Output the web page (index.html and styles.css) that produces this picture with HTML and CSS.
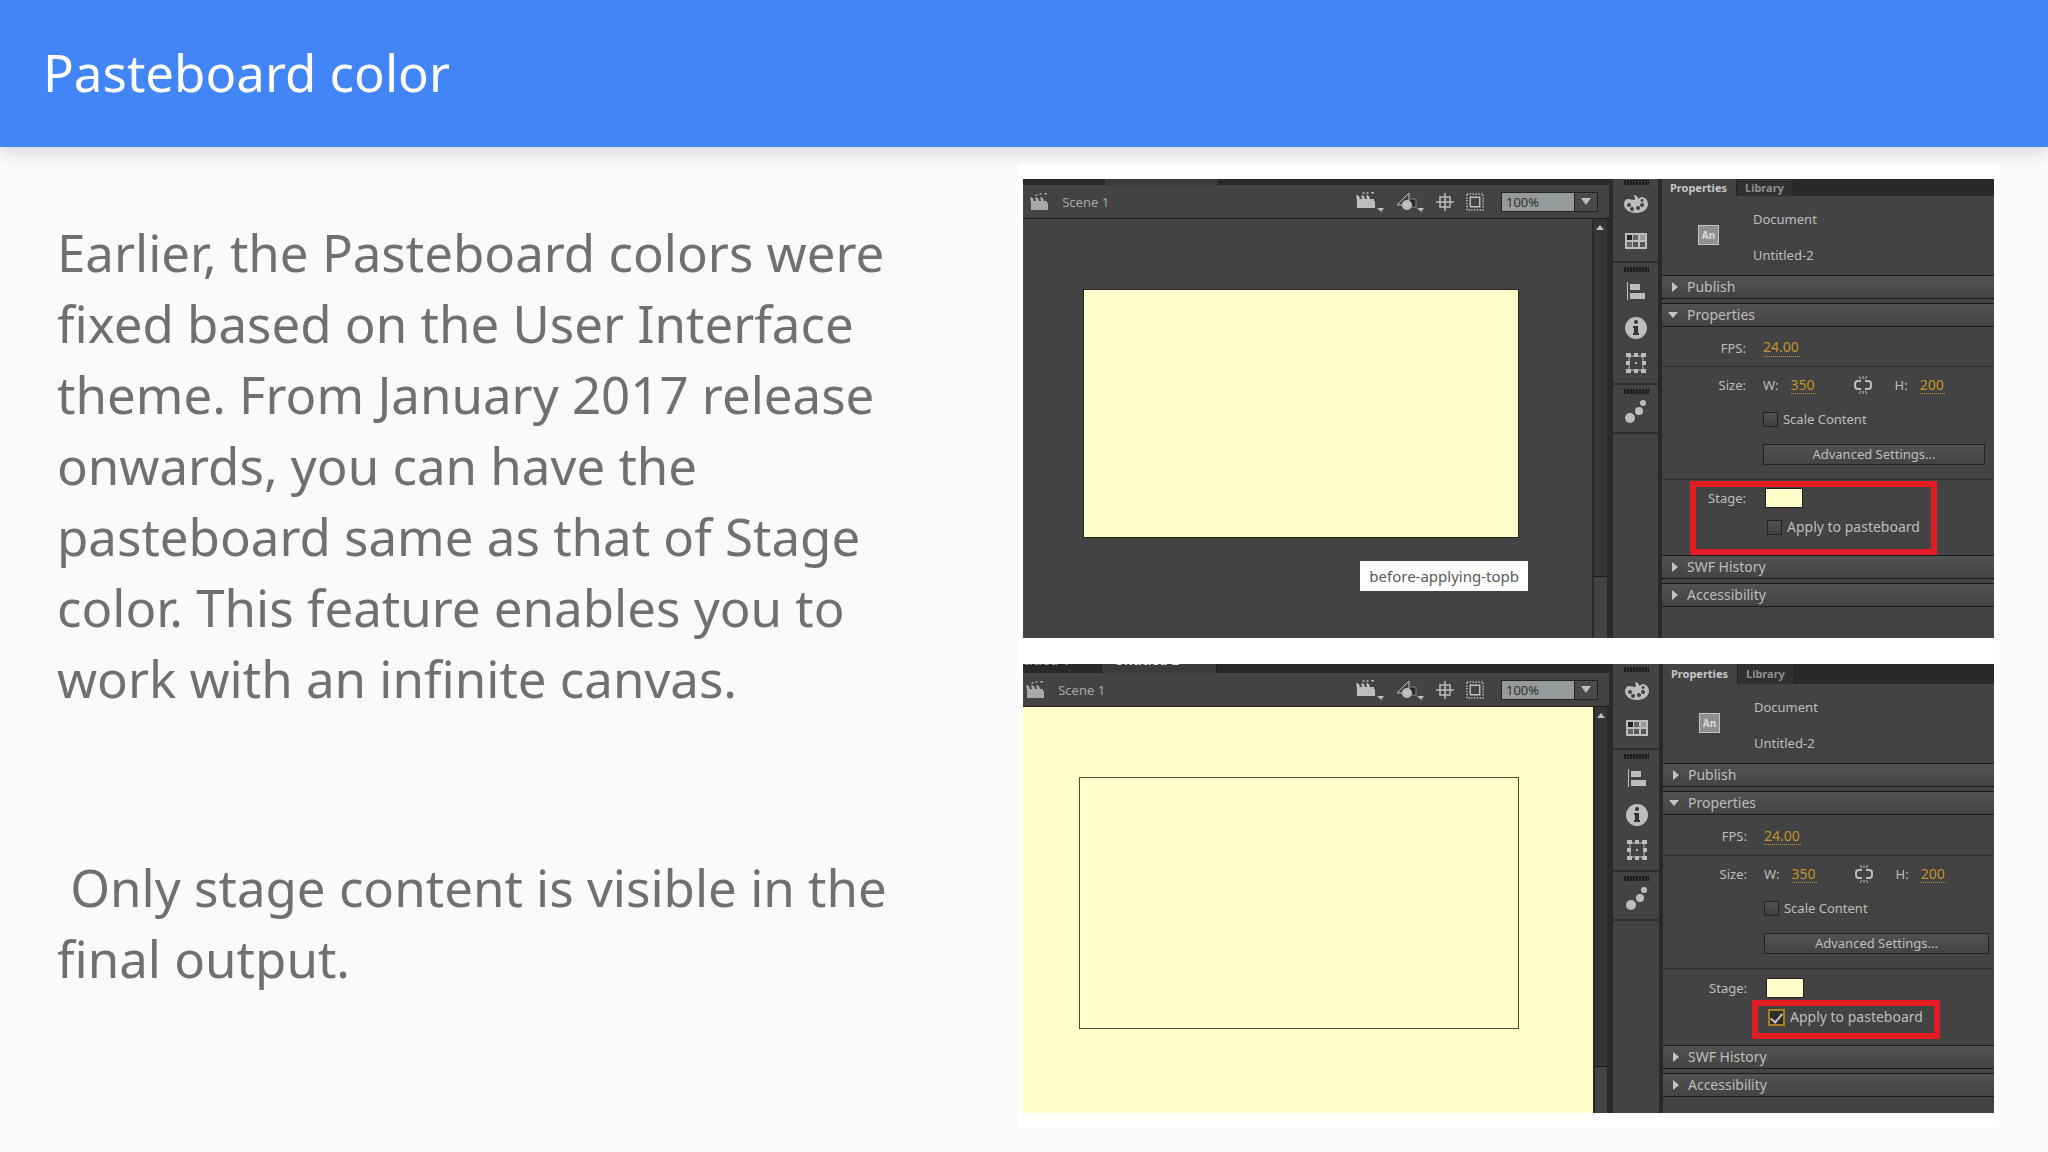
FILE: index.html
```html
<!DOCTYPE html>
<html lang="en">
<head>
    <meta charset="UTF-8">
    <meta name="viewport" content="width=device-width, initial-scale=1.0">
    <title>Pasteboard color</title>
    <link rel="stylesheet" href="styles.css">
</head>
<body>
    <!-- Icon set shared by both screens -->
    <svg class="sprite" aria-hidden="true">
        <symbol id="i-scene" viewBox="0 0 18 18">
            <path d="M1 10h17v7H1z"/>
            <path d="M0 4l3 1 1 3h2l-1-4 3 1 1 3h2l-1-4 3 1 1 3h3v2H1z"/>
            <path d="M5 2l2-1 1 1-2 1zM9 1l2-1 1 1-2 1zM14 0l3-1v2l-2 1z"/>
        </symbol>
        <symbol id="i-edit-scene" viewBox="0 0 28 20">
            <path d="M1 9h18v7H1z"/>
            <path d="M0 3l3 1 1 3h2L5 3l3 1 1 3h2l-1-4 3 1 1 3h4v2H1z"/>
            <path d="M6 1l2-1 1 1-2 1zM10 1l2-1 1 1-2 1zM15 0l3-1v2l-2 1z"/>
            <path d="M21 16h7l-3 4z"/>
        </symbol>
        <symbol id="i-edit-symbol" viewBox="0 0 28 20">
            <path d="M1 13L13 1v12z" fill="none" stroke="currentColor" stroke-width="1"/>
            <path d="M13 7h7v8h-7z" fill="#292929" stroke="#8a8a8a" stroke-width="1"/>
            <circle cx="11" cy="13" r="5"/>
            <path d="M21 16h7l-3 4z"/>
        </symbol>
        <symbol id="i-center" viewBox="0 0 18 20">
            <path d="M9 1v18M0 10h18M4 5h10v10H4z" fill="none" stroke="currentColor" stroke-width="1.5"/>
        </symbol>
        <symbol id="i-clip" viewBox="0 0 19 20">
            <path d="M1 1.5h17v17H1z" fill="none" stroke="#a0a0a0" stroke-width="2" stroke-dasharray="1.5 1.5"/>
            <path d="M4.500 5h10v10h-10z" fill="none" stroke="currentColor" stroke-width="1.500"/>
        </symbol>
        <symbol id="i-palette" viewBox="0 0 24 18">
            <path fill-rule="evenodd" d="M10 0c2 0 3 1 4 3 1 1 2 0 3-1 4 0 7 3 7 7 0 5-5 9-12 9S0 14 0 9c0-3 2-5 4-5 3 0 6 2 7 0 0-2-1-3-1-4zM5 8a2 2 0 1 0 .1 0zM8 12a2 2 0 1 0 .1 0zM14 11a2 2 0 1 0 .1 0zM18 8a2 2 0 1 0 .1 0zM18 4a1.500 1.500 0 1 0 .1 0z"/>
        </symbol>
        <symbol id="i-swatches" viewBox="0 0 22 16">
            <path d="M0 0h22v16H0z"/>
            <path d="M2 2h5v5H2z" fill="#222"/>
            <path d="M8 2h5v5H8zM2 9h5v5H2z" fill="#666"/>
            <path d="M15 2h5v5h-5z" fill="#999"/>
            <path d="M8 9h5v5H8zM15 9h5v5h-5z" fill="#555"/>
        </symbol>
        <symbol id="i-align" viewBox="0 0 18 18">
            <path d="M0 0h1v18H0zM3 2h10v6H3zM3 11h15v6H3z"/>
        </symbol>
        <symbol id="i-info" viewBox="0 0 22 22">
            <circle cx="11" cy="11" r="11"/>
            <circle cx="11" cy="5" r="2" fill="#333"/>
            <path d="M8 9h5v7h1v2H8v-2h1v-5H8z" fill="#333"/>
        </symbol>
        <symbol id="i-transform" viewBox="0 0 20 20">
            <path d="M3 3h14v14H3z" fill="none" stroke="currentColor" stroke-width="1"/>
            <path d="M0 0h5v4H0zM8 0h4v4H8zM15 0h5v4h-5zM0 8h4v4H0zM16 8h4v4h-4zM0 16h5v4H0zM8 16h4v4H8zM15 16h5v4h-5zM9 9h2v2H9z"/>
        </symbol>
        <symbol id="i-brush" viewBox="0 0 22 24">
            <circle cx="5" cy="18" r="5"/>
            <circle cx="14" cy="11" r="4"/>
            <circle cx="18" cy="3" r="3"/>
        </symbol>
        <symbol id="i-unlink" viewBox="0 0 18 18">
            <path d="M7 5H4a3 3 0 0 0-3 3v2a3 3 0 0 0 3 3h3M11 5h3a3 3 0 0 1 3 3v2a3 3 0 0 1-3 3h-3" fill="none" stroke="currentColor" stroke-width="2"/>
            <path d="M9 0v3M5 0l2 3M13 0l-2 3M9 18v-3M5 18l2-3M13 18l-2-3" fill="none" stroke="currentColor" stroke-width="1"/>
        </symbol>
    </svg>

    <header class="slide-header">
        <h1>Pasteboard color</h1>
    </header>

    <main class="slide-body">
        <section class="copy">
            <p>Earlier, the Pasteboard colors were fixed based on the User Interface theme. From January 2017 release onwards, you can have the pasteboard same as that of Stage color. This feature enables you to work with an infinite canvas.</p>
            <p>&nbsp;Only stage content is visible in the final output.</p>
        </section>

        <section class="shots">
            <!-- Before: pasteboard keeps the theme color -->
            <div class="shot shot-before">
                <div class="workspace">
                    <div class="doc-tabs"><span class="doc-tab"></span><span class="doc-tab active"></span></div>
                    <div class="toolbar">
                        <svg class="scene-icon"><use href="#i-scene"/></svg>
                        <span class="scene-name">Scene 1</span>
                        <button class="tool tool-wide" aria-label="Edit scene"><svg><use href="#i-edit-scene"/></svg></button>
                        <button class="tool tool-wide" aria-label="Edit symbols"><svg><use href="#i-edit-symbol"/></svg></button>
                        <button class="tool" aria-label="Center stage"><svg><use href="#i-center"/></svg></button>
                        <button class="tool" aria-label="Clip content"><svg><use href="#i-clip"/></svg></button>
                        <div class="zoom">
                            <select aria-label="Zoom"><option>100%</option></select>
                        </div>
                    </div>
                    <div class="view">
                        <div class="pasteboard">
                            <div class="stage"></div>
                            <span class="tooltip">before-applying-topb</span>
                        </div>
                        <div class="scrollbar"><div class="thumb"></div></div>
                    </div>
                </div>

                <nav class="dock">
                    <div class="dock-group">
                        <button aria-label="Color"><svg width="24" height="18"><use href="#i-palette"/></svg></button>
                        <button aria-label="Swatches"><svg width="22" height="16"><use href="#i-swatches"/></svg></button>
                    </div>
                    <div class="dock-group">
                        <button aria-label="Align"><svg width="18" height="18"><use href="#i-align"/></svg></button>
                        <button aria-label="Info"><svg width="22" height="22"><use href="#i-info"/></svg></button>
                        <button aria-label="Transform"><svg width="20" height="20"><use href="#i-transform"/></svg></button>
                    </div>
                    <div class="dock-group">
                        <button aria-label="Brushes"><svg width="22" height="24"><use href="#i-brush"/></svg></button>
                    </div>
                </nav>

                <div class="panel">
                    <div class="panel-tabs">
                        <button class="panel-tab active">Properties</button>
                        <button class="panel-tab">Library</button>
                    </div>
                    <div class="doc-info">
                        <span class="an-icon">An</span>
                        <div class="doc-names">
                            <span>Document</span>
                            <span>Untitled-2</span>
                        </div>
                    </div>
                    <button class="section-title">Publish</button>
                    <button class="section-title open">Properties</button>
                    <div class="row row-fps">
                        <label class="row-label" for="fps-1">FPS:</label>
                        <input class="hot-text hot-wide" id="fps-1" type="text" value="24.00">
                    </div>
                    <div class="row row-size">
                        <span class="row-label">Size:</span>
                        <label for="w-1">W:</label>
                        <input class="hot-text" id="w-1" type="text" value="350">
                        <svg class="unlink"><use href="#i-unlink"/></svg>
                        <label for="h-1">H:</label>
                        <input class="hot-text" id="h-1" type="text" value="200">
                    </div>
                    <div class="row row-check">
                        <input id="scale-1" type="checkbox">
                        <label for="scale-1">Scale Content</label>
                    </div>
                    <div class="row row-button">
                        <button class="advanced">Advanced Settings...</button>
                    </div>
                    <div class="stage-settings">
                        <div class="row row-stage">
                            <span class="row-label">Stage:</span>
                            <button class="swatch" aria-label="Stage color"></button>
                        </div>
                        <div class="row row-check row-apply">
                            <input id="apply-1" type="checkbox">
                            <label for="apply-1">Apply to pasteboard</label>
                        </div>
                        <div class="highlight"></div>
                    </div>
                    <button class="section-title">SWF History</button>
                    <button class="section-title">Accessibility</button>
                </div>
            </div>

            <!-- After: pasteboard takes the stage color -->
            <div class="shot shot-after">
                <div class="workspace">
                    <div class="doc-tabs"><span class="doc-tab">titled-1*</span><span class="doc-tab active">Untitled-2</span></div>
                    <div class="toolbar">
                        <svg class="scene-icon"><use href="#i-scene"/></svg>
                        <span class="scene-name">Scene 1</span>
                        <button class="tool tool-wide" aria-label="Edit scene"><svg><use href="#i-edit-scene"/></svg></button>
                        <button class="tool tool-wide" aria-label="Edit symbols"><svg><use href="#i-edit-symbol"/></svg></button>
                        <button class="tool" aria-label="Center stage"><svg><use href="#i-center"/></svg></button>
                        <button class="tool" aria-label="Clip content"><svg><use href="#i-clip"/></svg></button>
                        <div class="zoom">
                            <select aria-label="Zoom"><option>100%</option></select>
                        </div>
                    </div>
                    <div class="view">
                        <div class="pasteboard">
                            <div class="stage"></div>
                        </div>
                        <div class="scrollbar"><div class="thumb"></div></div>
                    </div>
                </div>

                <nav class="dock">
                    <div class="dock-group">
                        <button aria-label="Color"><svg width="24" height="18"><use href="#i-palette"/></svg></button>
                        <button aria-label="Swatches"><svg width="22" height="16"><use href="#i-swatches"/></svg></button>
                    </div>
                    <div class="dock-group">
                        <button aria-label="Align"><svg width="18" height="18"><use href="#i-align"/></svg></button>
                        <button aria-label="Info"><svg width="22" height="22"><use href="#i-info"/></svg></button>
                        <button aria-label="Transform"><svg width="20" height="20"><use href="#i-transform"/></svg></button>
                    </div>
                    <div class="dock-group">
                        <button aria-label="Brushes"><svg width="22" height="24"><use href="#i-brush"/></svg></button>
                    </div>
                </nav>

                <div class="panel">
                    <div class="panel-tabs">
                        <button class="panel-tab active">Properties</button>
                        <button class="panel-tab">Library</button>
                    </div>
                    <div class="doc-info">
                        <span class="an-icon">An</span>
                        <div class="doc-names">
                            <span>Document</span>
                            <span>Untitled-2</span>
                        </div>
                    </div>
                    <button class="section-title">Publish</button>
                    <button class="section-title open">Properties</button>
                    <div class="row row-fps">
                        <label class="row-label" for="fps-2">FPS:</label>
                        <input class="hot-text hot-wide" id="fps-2" type="text" value="24.00">
                    </div>
                    <div class="row row-size">
                        <span class="row-label">Size:</span>
                        <label for="w-2">W:</label>
                        <input class="hot-text" id="w-2" type="text" value="350">
                        <svg class="unlink"><use href="#i-unlink"/></svg>
                        <label for="h-2">H:</label>
                        <input class="hot-text" id="h-2" type="text" value="200">
                    </div>
                    <div class="row row-check">
                        <input id="scale-2" type="checkbox">
                        <label for="scale-2">Scale Content</label>
                    </div>
                    <div class="row row-button">
                        <button class="advanced">Advanced Settings...</button>
                    </div>
                    <div class="stage-settings">
                        <div class="row row-stage">
                            <span class="row-label">Stage:</span>
                            <button class="swatch" aria-label="Stage color"></button>
                        </div>
                        <div class="row row-check row-apply">
                            <input id="apply-2" type="checkbox" checked>
                            <label for="apply-2">Apply to pasteboard</label>
                        </div>
                        <div class="highlight"></div>
                    </div>
                    <button class="section-title">SWF History</button>
                    <button class="section-title">Accessibility</button>
                </div>
            </div>
        </section>
    </main>
</body>
</html>
```
FILE: styles.css
```css
* {
    margin: 0;
    padding: 0;
    box-sizing: border-box;
}

body {
    font-family: 'Noto Sans', sans-serif;
    background: #fafafa;
    color: #707070;
    min-height: 100vh;
}

button,
input,
select {
    font: inherit;
    color: inherit;
    border: none;
    background: none;
    border-radius: 0;
}

svg {
    display: block;
    fill: currentColor;
}

.sprite {
    position: absolute;
    width: 0;
    height: 0;
}

.slide-header {
    background: #4285f6;
    color: #fff;
    height: 147px;
    padding: 0 43px 3px;
    display: flex;
    align-items: center;
    box-shadow: 0 6px 16px rgba(0, 0, 0, 0.14);
}

.slide-header h1 {
    font-size: 51px;
    font-weight: 400;
}

.slide-body {
    display: grid;
    grid-template-columns: 98fr 100fr;
    align-items: start;
    padding: 17px 49px 24px 57px;
}

.copy {
    font-size: 51px;
    line-height: 71px;
    padding: 53px 60px 0 0;
}

.copy p + p {
    margin-top: 138px;
}

.shots {
    background: #fff;
    padding: 15px 5px;
    display: flex;
    flex-direction: column;
    gap: 26px;
}

/* Application window */
.shot {
    display: grid;
    grid-template-columns: 1fr 45px 332px;
    column-gap: 4px;
    min-height: 459px;
    background: #292929;
    color: #bdbdbd;
    font-size: 13px;
    line-height: 18px;
    overflow: hidden;
}

.shot-after {
    grid-template-columns: 1fr 46px 331px;
    min-height: 449px;
}

.workspace {
    display: flex;
    flex-direction: column;
    min-width: 0;
}

.doc-tabs {
    display: flex;
    height: 6px;
    overflow: hidden;
    align-items: flex-end;
    font-weight: 700;
    color: #ddd;
}

.doc-tab {
    width: 82px;
    height: 22px;
    flex: none;
}

.doc-tab.active {
    width: 113px;
    padding-left: 12px;
    background: #3c3c3c;
}

.shot-after .doc-tabs {
    height: 9px;
}

.shot-after .doc-tab {
    width: 79px;
    color: #8f8f8f;
    border-right: 1px solid #1d1d1d;
}

.shot-after .doc-tab.active {
    width: 115px;
    color: #ddd;
}

.toolbar {
    display: flex;
    align-items: center;
    gap: 12px;
    height: 34px;
    padding: 0 11px 0 7px;
    background: #434343;
    border-bottom: 1px solid #1f1f1f;
}

.shot-after .toolbar {
    padding-left: 3px;
}

.scene-icon {
    width: 18px;
    height: 18px;
    color: #a8a8a8;
    overflow: visible;
}

.scene-name {
    flex: 1;
    padding-left: 2px;
    color: #a8a8a8;
}

.tool,
.tool svg {
    width: 18px;
    height: 20px;
    overflow: visible;
}

.tool-wide,
.tool-wide svg {
    width: 28px;
}

.zoom {
    position: relative;
    width: 97px;
    height: 20px;
    margin-left: 5px;
    border: 1px solid #222;
    background: #4a4a4a;
}

.zoom select {
    appearance: none;
    width: 100%;
    height: 18px;
    padding-left: 4px;
    color: #333;
    background: linear-gradient(90deg, #979a9b 72px, #222 72px, #222 73px, #4a4a4a 73px);
}

.zoom::after {
    content: '';
    position: absolute;
    right: 6px;
    top: 5px;
    border: 5px solid transparent;
    border-top: 7px solid #bdbdbd;
    border-bottom: none;
    pointer-events: none;
}

.view {
    display: flex;
    flex: 1;
    background: #434343;
}

.pasteboard {
    position: relative;
    flex: 1;
    padding: 70px 73px 0 60px;
}

.stage {
    height: 249px;
    background: #ffffcc;
    border: 1px solid #26261c;
}

.shot-after .pasteboard {
    background: #ffffcc;
    padding: 70px 74px 0 56px;
}

.shot-after .stage {
    height: 252px;
    border-color: #4a4a3a;
}

.tooltip {
    position: absolute;
    right: 64px;
    bottom: 47px;
    padding: 5px 9px;
    background: #fff;
    color: #5a5a5a;
    font-size: 15px;
    line-height: 20px;
}

.scrollbar {
    width: 17px;
    background: #363636;
    border: 2px solid #292929;
    border-top-width: 0;
    border-bottom: none;
    display: flex;
    flex-direction: column;
    justify-content: space-between;
}

.shot-after .scrollbar {
    width: 16px;
}

.scrollbar::before {
    content: '';
    align-self: center;
    margin-top: 6px;
    border: 4px solid transparent;
    border-bottom: 5px solid #bdbdbd;
    border-top: none;
}

.thumb {
    height: 62px;
    background: #434343;
    border-top: 1px solid #1a1a1a;
}

.shot-after .thumb {
    height: 47px;
}

/* Icon dock */
.dock {
    background: #434343;
}

.dock-group {
    display: flex;
    flex-direction: column;
    align-items: center;
    border-bottom: 2px solid #2e2e2e;
    padding: 0 0 3px 2px;
}

.dock-group::before {
    content: '';
    width: 25px;
    height: 5px;
    margin-top: 4px;
    background: repeating-linear-gradient(90deg, #1d1d1d 0 2px, #3a3a3a 2px 3px);
}

.dock-group:first-child::before {
    margin-top: 1px;
}

.shot-after .dock-group:first-child::before {
    margin-top: 3px;
}

.dock button {
    display: flex;
    align-items: center;
    justify-content: center;
    width: 100%;
    height: 35px;
}

.dock-group:first-child button:first-of-type {
    height: 38px;
}

.dock-group:nth-child(2) button:first-of-type {
    height: 38px;
}

/* Properties panel */
.panel {
    background: #434343;
    min-width: 0;
}

.panel-tabs {
    display: flex;
    height: 17px;
    background: #292929;
}

.shot-after .panel-tabs {
    height: 20px;
}

.panel-tab {
    padding: 0 9px 0 8px;
    font-size: 11px;
    line-height: 16px;
    font-weight: 700;
    color: #8f8f8f;
    background: #303030;
    border-right: 1px solid #222;
}

.panel-tab.active {
    color: #c8c8c8;
    background: #434343;
}

.doc-info {
    display: flex;
    align-items: center;
    gap: 34px;
    height: 79px;
    padding: 2px 0 0 36px;
}

.an-icon {
    width: 21px;
    height: 20px;
    margin-bottom: 3px;
    border: 1px solid #c4c4c4;
    background: #8f8f8f;
    color: #d8d8d8;
    font-size: 10px;
    line-height: 18px;
    font-weight: 700;
    text-align: center;
}

.doc-names {
    display: flex;
    flex-direction: column;
    gap: 18px;
}

.section-title {
    display: flex;
    align-items: center;
    gap: 9px;
    width: 100%;
    height: 24px;
    padding-left: 10px;
    margin-bottom: 4px;
    border-top: 1px solid #1c1c1c;
    border-bottom: 1px solid #1c1c1c;
    background: linear-gradient(#525252, #434343);
    font-size: 14px;
}

.section-title::before {
    content: '';
    border: 5px solid transparent;
    border-left: 6px solid #c4c4c4;
    border-right: none;
}

.section-title.open {
    margin-bottom: 0;
    padding-left: 6px;
}

.section-title.open::before {
    border: 5px solid transparent;
    border-top: 6px solid #c4c4c4;
    border-bottom: none;
}

.row {
    display: flex;
    align-items: center;
    padding-left: 101px;
}

.row-label {
    width: 84px;
    text-align: right;
    margin-right: 17px;
}

.row-fps,
.row-size,
.row-stage {
    padding-left: 0;
}

.row-fps {
    height: 40px;
    padding-top: 2px;
    border-bottom: 1px solid #303030;
}

.row-size {
    height: 36px;
}

.hot-text {
    width: 25px;
    height: 18px;
    margin: 0 38px 0 12px;
    color: #c0932b;
    font-size: 14px;
    border-bottom: 1px dotted #c0932b;
}

.hot-wide {
    width: 37px;
    margin: 0;
}

.unlink {
    width: 18px;
    height: 18px;
    margin-right: 23px;
}

.row-check {
    height: 32px;
    gap: 5px;
}

.row-check input {
    appearance: none;
    width: 15px;
    height: 15px;
    background: linear-gradient(#525252, #3e3e3e);
    border: 1px solid #222;
}

.row-check input:checked {
    width: 17px;
    height: 17px;
    border: 2px solid #a87f1f;
    background: #2c2c2c;
    display: flex;
    justify-content: center;
}

.row-check input:checked::after {
    content: '';
    width: 5px;
    height: 10px;
    border: solid #c4c4c4;
    border-width: 0 2px 2px 0;
    transform: rotate(40deg);
}

.row-button {
    height: 44px;
    padding-right: 9px;
    padding-bottom: 6px;
}

.advanced {
    flex: 1;
    height: 21px;
    border: 1px solid #222;
    background: linear-gradient(#525252, #434343);
}

.stage-settings {
    position: relative;
    height: 76px;
    padding-top: 3px;
    border-top: 1px solid #303030;
}

.row-stage {
    height: 30px;
}

.swatch {
    width: 38px;
    height: 20px;
    margin-left: 2px;
    background: #ffffcc;
    border: 1px solid #222;
}

.row-apply {
    height: 28px;
    padding-left: 105px;
    font-size: 14px;
}

/* Red callout drawn over the settings */
.highlight {
    position: absolute;
    top: 1px;
    left: 28px;
    right: 57px;
    bottom: 0;
    border: 6px solid #e31b23;
    pointer-events: none;
}

.shot-after .row-fps {
    height: 41px;
}

.shot-after .row-button {
    padding-right: 5px;
}

.shot-after .stage-settings {
    height: 77px;
    padding-top: 4px;
}

.shot-after .highlight {
    top: 31px;
    left: 89px;
    right: 54px;
    bottom: 6px;
}
```
